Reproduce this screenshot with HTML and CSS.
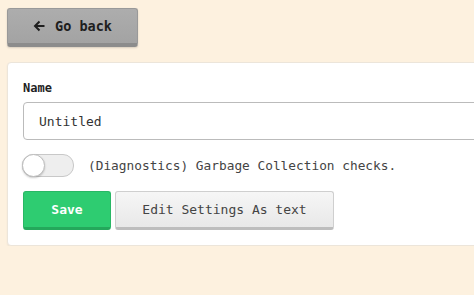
FILE: index.html
```html
<!DOCTYPE html>
<html>
<head>
  <title>Settings</title>
  <meta charset="UTF-8">
  <link rel="stylesheet" href="styles.css">
</head>
<body>
  <div class="page">
    <button class="btn btn-back">
      <svg class="back-icon" width="12" height="12" viewBox="0 0 12 12"><path d="M11.5 6H2M6.5 1.5L2 6l4.5 4.5" fill="none" stroke="#1e1e1e" stroke-width="2"/></svg>
      Go back
    </button>

    <div class="card">
      <label class="field-label" for="name">Name</label>
      <input id="name" class="text-input" type="text" value="Untitled">

      <!-- diagnostics switch -->
      <div class="switch-row">
        <span class="switch"><span class="knob"></span></span>
        <span class="switch-text">(Diagnostics) Garbage Collection checks.</span>
      </div>

      <div class="actions">
        <button class="btn btn-save">Save</button>
        <button class="btn btn-light">Edit Settings As text</button>
      </div>
    </div>
  </div>
</body>
</html>
```

FILE: styles.css
```css
html, body {
  margin: 0;
  background: #fdf1df;
  font-family: "DejaVu Sans Mono", monospace;
  color: #333;
  overflow: hidden;
}

.page {
  padding: 8px 0 0 7px;
  display: flex;
  flex-direction: column;
  align-items: flex-start;
  gap: 15px;
}

.btn {
  font-family: "DejaVu Sans Mono", monospace;
  font-size: 13px;
  height: 39px;
  border-radius: 3px;
  cursor: pointer;
  box-sizing: border-box;
}
.btn-back {
  width: 131px;
  background: linear-gradient(#adadad, #a3a3a3);
  border: 1px solid #999;
  border-bottom: 4px solid #8c8c8c;
  color: #1e1e1e;
  font-weight: bold;
  font-size: 13.5px;
  display: flex;
  align-items: center;
  justify-content: center;
  gap: 10px;
  padding: 0 0 0 0;
  box-shadow: 0 1px 2px rgba(0,0,0,0.15);
}
.back-icon {
  display: block;
}

.card {
  width: 600px;
  background: #fff;
  border: 1px solid #ece5da;
  border-radius: 4px;
  box-shadow: 0 1px 2px rgba(0,0,0,0.06);
  padding: 16px 14px 15px 14px;
  box-sizing: border-box;
  display: flex;
  flex-direction: column;
}

.field-label {
  font-weight: bold;
  font-size: 12px;
  color: #222;
  line-height: 16px;
  margin: 1px 0 6px 1px;
}

.text-input {
  font-family: "DejaVu Sans Mono", monospace;
  font-size: 13px;
  color: #333;
  height: 38px;
  box-sizing: border-box;
  border: 1px solid #bbb;
  border-radius: 4px;
  padding: 0 15px;
  margin-left: 1px;
  outline: none;
}

.switch-row {
  display: flex;
  align-items: center;
  gap: 14px;
  margin: 14px 0 0 0;
}
.switch {
  width: 50px;
  height: 21px;
  border-radius: 11px;
  background: #eee;
  border: 1px solid #c8c8c8;
  position: relative;
  flex-shrink: 0;
}
.knob {
  position: absolute;
  left: -1px;
  top: -1px;
  width: 21px;
  height: 21px;
  border-radius: 50%;
  background: #fff;
  border: 1px solid #bdbdbd;
  box-shadow: 0 1px 2px rgba(0,0,0,0.2);
}
.switch-text {
  font-size: 12.8px;
  color: #444;
}

.actions {
  display: flex;
  gap: 4px;
  margin: 14px 0 0 1px;
}
.btn-save {
  width: 88px;
  background: #2ecc71;
  border: 1px solid #29b765;
  border-bottom: 3px solid #24a85b;
  color: #fff;
  font-weight: bold;
}
.btn-light {
  width: 219px;
  background: linear-gradient(#f6f6f6, #e8e8e8);
  border: 1px solid #cfcfcf;
  border-bottom: 3px solid #bdbdbd;
  color: #444;
}
```
